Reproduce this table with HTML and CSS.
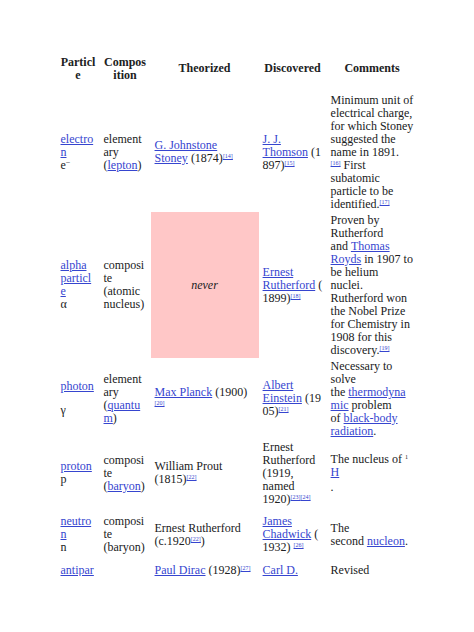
FILE: index.html
```html
<!DOCTYPE html>
<html lang="en">
<head>
<meta charset="utf-8">
<title>Particles</title>
<link rel="stylesheet" href="styles.css">
</head>
<body>
<div class="page">
<table class="particles">
<colgroup>
<col class="c1"><col class="c2"><col class="c3"><col class="c4"><col class="c5">
</colgroup>
<thead>
<tr>
<th>Particle</th>
<th>Composition</th>
<th>Theorized</th>
<th>Discovered</th>
<th>Comments</th>
</tr>
</thead>
<tbody>
<tr>
<td><a href="#">electron</a><br>e<sup class="sym">−</sup></td>
<td>elementary (<a href="#">lepton</a>)</td>
<td><a href="#">G. Johnstone Stoney</a>&nbsp;(1874)<sup class="ref"><a href="#">[14]</a></sup></td>
<td><a href="#">J. J. Thomson</a>&nbsp;(1897)<sup class="ref"><a href="#">[15]</a></sup></td>
<td>Minimum unit of electrical charge, for which Stoney suggested the name in 1891.<br><sup class="ref"><a href="#">[16]</a></sup> First subatomic particle to be identified.<sup class="ref"><a href="#">[17]</a></sup></td>
</tr>
<tr>
<td><a href="#">alpha particle</a><br>α</td>
<td>composite (atomic nucleus)</td>
<td class="never">never</td>
<td><a href="#">Ernest Rutherford</a>&nbsp;(1899)<sup class="ref"><a href="#">[18]</a></sup></td>
<td>Proven by Rutherford and&nbsp;<a href="#">Thomas Royds</a> in 1907 to be helium nuclei. Rutherford won the Nobel Prize for Chemistry in 1908 for this discovery.<sup class="ref"><a href="#">[19]</a></sup></td>
</tr>
<tr>
<td><a href="#">photon</a><span class="sym-gap">γ</span></td>
<td>elementary (<a href="#">quantum</a>)</td>
<td><a href="#">Max Planck</a>&nbsp;(1900)<sup class="ref"><a href="#">[20]</a></sup></td>
<td><a href="#">Albert Einstein</a>&nbsp;(1905)<sup class="ref"><a href="#">[21]</a></sup></td>
<td>Necessary to solve the&nbsp;<a href="#">thermodynamic</a> problem of&nbsp;<a href="#">black-body radiation</a>.</td>
</tr>
<tr>
<td><a href="#">proton</a><br>p</td>
<td>composite (<a href="#">baryon</a>)</td>
<td>William Prout (1815)<sup class="ref"><a href="#">[22]</a></sup></td>
<td>Ernest Rutherford (1919, named 1920)<sup class="ref"><a href="#">[23]</a><a href="#">[24]</a></sup></td>
<td>The nucleus of <sup class="iso">1</sup><span class="blk"><a href="#">H</a></span><span class="blk dot">.</span></td>
</tr>
<tr class="tall">
<td><a href="#">neutron</a><br>n</td>
<td>composite (baryon)</td>
<td>Ernest Rutherford (c.1920<sup class="ref"><a href="#">[22]</a></sup>)</td>
<td><a href="#">James Chadwick</a>&nbsp;(1932) <sup class="ref"><a href="#">[26]</a></sup></td>
<td>The second&nbsp;<a href="#">nucleon</a>.</td>
</tr>
<tr class="top">
<td><a href="#">antiparticle</a></td>
<td></td>
<td><a href="#">Paul Dirac</a> (1928)<sup class="ref"><a href="#">[27]</a></sup></td>
<td><a href="#">Carl D. Anderson</a> (1932)</td>
<td>Revised explanation uses CPT symmetry.</td>
</tr>
</tbody>
</table>
</div>
</body>
</html>
```

FILE: styles.css
```css
html, body {
  margin: 0;
  padding: 0;
  background: #ffffff;
}

.page {
  box-sizing: border-box;
  height: 576px;
  overflow: hidden;
  padding-top: 54px;
}

.particles {
  margin: 0 auto;
  table-layout: fixed;
  width: 361px;
  border-collapse: separate;
  border-spacing: 0;
  font-family: "Liberation Serif", "Times New Roman", serif;
  font-size: 12px;
  line-height: 13px;
  color: #202122;
}

.c1 { width: 43px; }
.c2 { width: 51px; }
.c3 { width: 108px; }
.c4 { width: 68px; }
.c5 { width: 90.85px; }

.particles th,
.particles td {
  padding: 1.5px 4px;
  vertical-align: middle;
  overflow-wrap: break-word;
  word-wrap: break-word;
}

.particles th {
  font-weight: bold;
  text-align: center;
  padding-bottom: 10.8px;
}

.particles td {
  text-align: left;
}

.particles a {
  color: #3645cf;
  text-decoration: underline;
}

.particles sup {
  line-height: 0;
}

.ref {
  font-size: 6px;
  vertical-align: 4px;
}

.sym {
  font-size: 8px;
  vertical-align: 4px;
}

.iso {
  font-size: 6px;
  vertical-align: 4px;
}

.never {
  background: #ffc7c7;
  text-align: center !important;
  font-style: italic;
}

.sym-gap {
  display: block;
  margin-top: 11px;
}

.blk {
  display: block;
}

.dot {
  margin-top: 2px;
}

.tall {
  height: 55px;
}

.top td {
  vertical-align: top;
}
```
